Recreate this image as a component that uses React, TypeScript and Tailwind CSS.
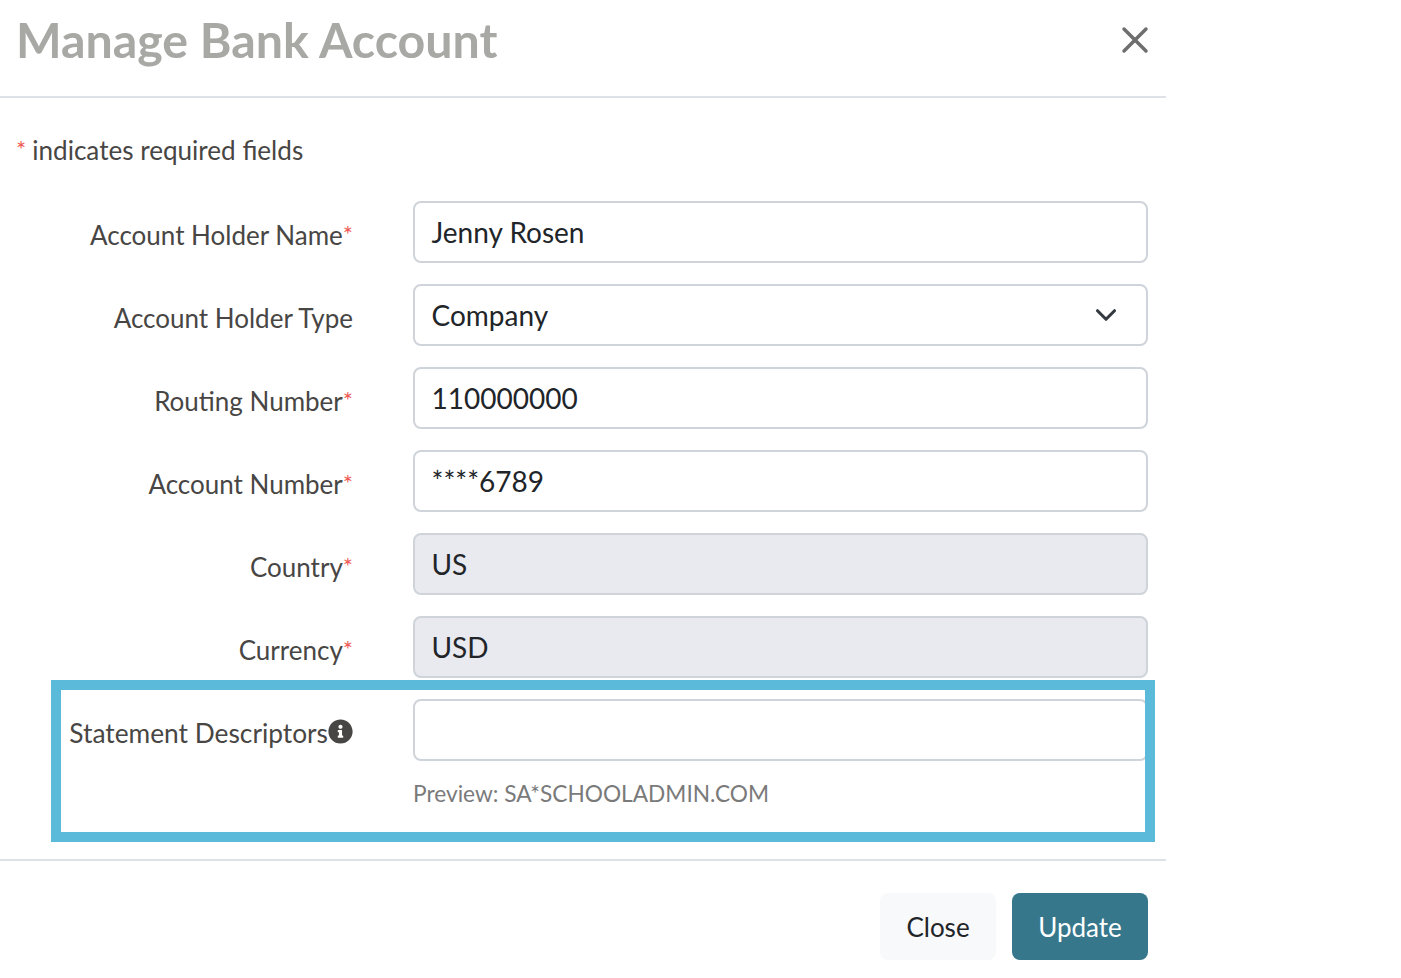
import { X, ChevronDown } from "lucide-react";

const fields = [
  { label: "Account Holder Name", value: "Jenny Rosen", required: true },
  { label: "Account Holder Type", value: "Company", select: true },
  { label: "Routing Number", value: "110000000", required: true },
  { label: "Account Number", value: "****6789", required: true },
  { label: "Country", value: "US", required: true, disabled: true },
  { label: "Currency", value: "USD", required: true, disabled: true },
];

function Row({ label, value, required, select, disabled }: any) {
  return (
    <div className="flex h-[62px] mb-[21px]">
      <div className="w-[353px] pt-[16px] text-right text-[26px] leading-[36px] text-[#484644]">
        {label}
        {required && <span className="text-[#ee5a55] text-[24px] align-[2px] leading-none">*</span>}
      </div>
      <div
        className={`ml-[60px] w-[735px] h-[62px] border-2 border-[#ced4da] rounded-lg pl-[16.5px] pr-[17px] flex items-center justify-between text-[28px] text-[#212529] ${
          disabled ? "bg-[#e9eaef]" : "bg-white"
        }`}
      >
        <span>{value}</span>
        {select && <ChevronDown size={34} strokeWidth={2.2} className="text-[#343a40] mr-[6px]" />}
      </div>
    </div>
  );
}

export default function App() {
  return (
    <div className="w-[1401px] h-[978px] bg-white overflow-hidden font-['Lato',sans-serif]">
      <div className="w-[1166px]">
        {/* header */}
        <div className="h-[98px] border-b-2 border-[#dee2e6] pl-[16px] pr-[14px] flex justify-between">
          <h1 className="text-[48.3px] leading-[79px] font-bold text-[#a8a8a5]">Manage Bank Account</h1>
          <X size={44} strokeWidth={1.9} className="text-[#6e6e6e] mt-[18px] mr-[-5px]" />
        </div>

        {/* body */}
        <div className="pt-[34px] h-[761px]">
          <p className="pl-[16px] h-[69px] text-[26.1px] leading-[36px] text-[#484644]">
            <span className="text-[#ee5a55] text-[24px] align-[2px] leading-none mr-[6px]">*</span>
            indicates required fields
          </p>

          {fields.map((f) => (
            <Row key={f.label} {...f} />
          ))}

          {/* highlighted row */}
          <div className="relative h-[161px]">
            <div className="flex">
              <div className="w-[353px] pt-[16px] text-right text-[26.3px] leading-[36px] text-[#484644] flex justify-end">
                <span>Statement Descriptors</span>
                <svg viewBox="0 0 512 512" className="w-[25px] h-[25px] mt-[4px] fill-[#484644]">
                  <path d="M256 8C119 8 8 119 8 256s111 248 248 248 248-111 248-248S393 8 256 8zm0 110c23 0 42 19 42 42s-19 42-42 42-42-19-42-42 19-42 42-42zm56 254c0 7-5 12-12 12h-88c-7 0-12-5-12-12v-24c0-7 5-12 12-12h12v-64h-12c-7 0-12-5-12-12v-24c0-7 5-12 12-12h64c7 0 12 5 12 12v100h12c7 0 12 5 12 12v24z" />
                </svg>
              </div>
              <div className="ml-[60px] w-[735px]">
                <div className="h-[62px] border-2 border-[#ced4da] rounded-lg bg-white" />
                <p className="mt-[15px] text-[22.7px] leading-[36px] text-[#7a7a7a]">Preview: SA*SCHOOLADMIN.COM</p>
              </div>
            </div>
            <div className="absolute left-[51px] top-[-19px] w-[1104px] h-[162px] border-[10px] border-[#5bb9da]" />
          </div>
        </div>

        {/* footer */}
        <div className="border-t-2 border-[#dee2e6] pt-[32px] pr-[18px] flex justify-end gap-[16px]">
          <button className="w-[116px] h-[67px] rounded-lg bg-[#f8f9fa] text-[26px] text-[#212529] pt-[2px]">Close</button>
          <button className="w-[136px] h-[67px] rounded-lg bg-[#36778c] text-[26px] text-white pt-[2px]">Update</button>
        </div>
      </div>
    </div>
  );
}
